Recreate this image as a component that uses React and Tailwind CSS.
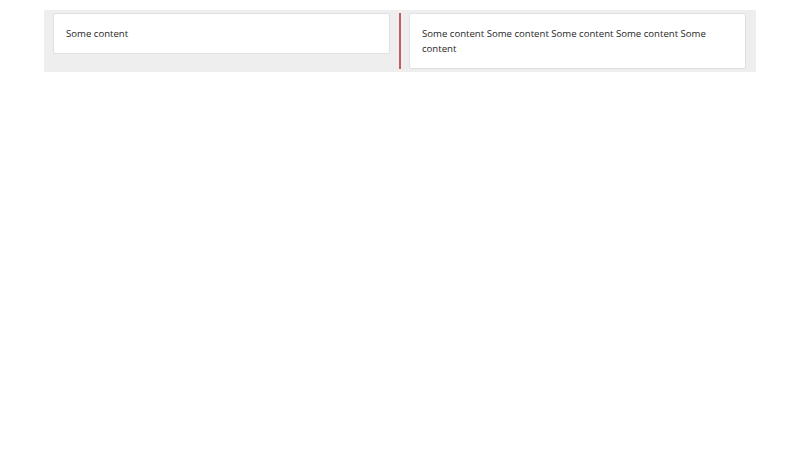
export default function App() {
  return (
    <div className="w-[800px] h-[450px] bg-white" style={{ fontFamily: '"Open Sans", "Noto Sans", sans-serif' }}>
      <div className="pt-[10px] px-[44px]">
        <div className="flex items-start bg-[#eeeeee] pl-[9px] pr-[10px] py-[3px]">
          <div className="flex-1 bg-white border border-[#e0e0e0] rounded-[2px] px-[12px] py-[12px] text-[9.6px] leading-[15px] text-[#262626]">
            Some content
          </div>
          <div className="self-stretch w-[1.5px] bg-[#c85c5c] ml-[9px] mr-[8.5px]"></div>
          <div className="flex-1 bg-white border border-[#e0e0e0] rounded-[2px] px-[12px] py-[12px] text-[9.6px] leading-[15px] text-[#262626]">
            Some content Some content Some content Some content Some content
          </div>
        </div>
      </div>
    </div>
  );
}
